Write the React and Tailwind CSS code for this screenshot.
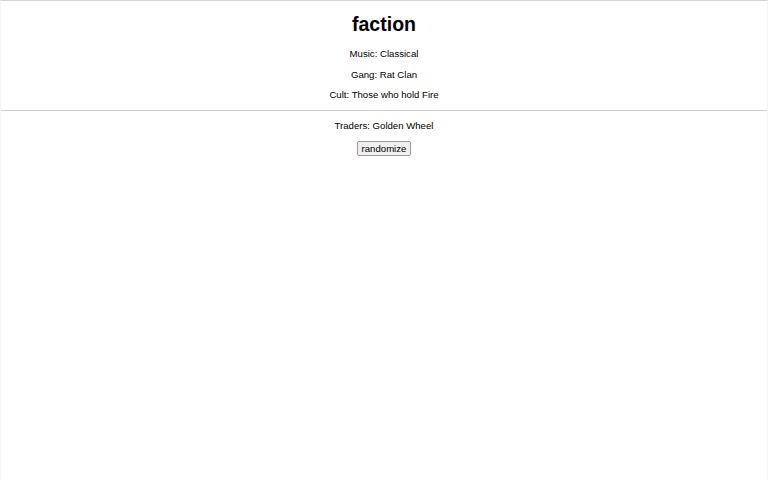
import { useState } from 'react';

const MUSIC = ['Classical', 'Jazz', 'Punk', 'Synthwave', 'Folk'];
const GANGS = ['Rat Clan', 'Iron Dogs', 'Neon Saints', 'Grey Hands'];
const CULTS = ['Those who hold Fire', 'The Silent Choir', 'Children of Rust'];
const TRADERS = ['Golden Wheel', 'Salt Road Co.', 'Blue Lantern'];

const pick = (list) => list[Math.floor(Math.random() * list.length)];

const Faction = () => {
  const [faccion, setFaccion] = useState({
    music: 'Classical',
    gang: 'Rat Clan',
    cult: 'Those who hold Fire',
    traders: 'Golden Wheel',
  });

  const randomize = () => {
    setFaccion({
      music: pick(MUSIC),
      gang: pick(GANGS),
      cult: pick(CULTS),
      traders: pick(TRADERS),
    });
  };

  return (
    <div className="min-h-[480px] w-full bg-white text-black border-t border-x border-[#d4d4d4] border-x-[#f6f6f6] font-['Liberation_Sans',Arial,sans-serif] text-center">
      <div className="border-b border-[#cfcfcf]">
        <h1 className="pt-[12px] text-[19.5px] leading-[23px] font-bold">faction</h1>
        <div className="mt-[12px] flex flex-col gap-[9px] pb-[9px] text-[9.6px] leading-[11.5px]">
          <p>Music: {faccion.music}</p>
          <p>Gang: {faccion.gang}</p>
          <p>Cult: {faccion.cult}</p>
        </div>
      </div>
      <p className="mt-[9px] text-[9.6px] leading-[11.5px]">Traders: {faccion.traders}</p>
      <div className="mt-[10px] flex justify-center">
        <button
          onClick={randomize}
          className="px-[4px] h-[15px] text-[9.6px] leading-[12px] bg-[#f0f0f0] border border-[#9a9a9a] rounded-[2px]"
        >
          randomize
        </button>
      </div>
    </div>
  );
};

export default function App() {
  return <Faction />;
}
